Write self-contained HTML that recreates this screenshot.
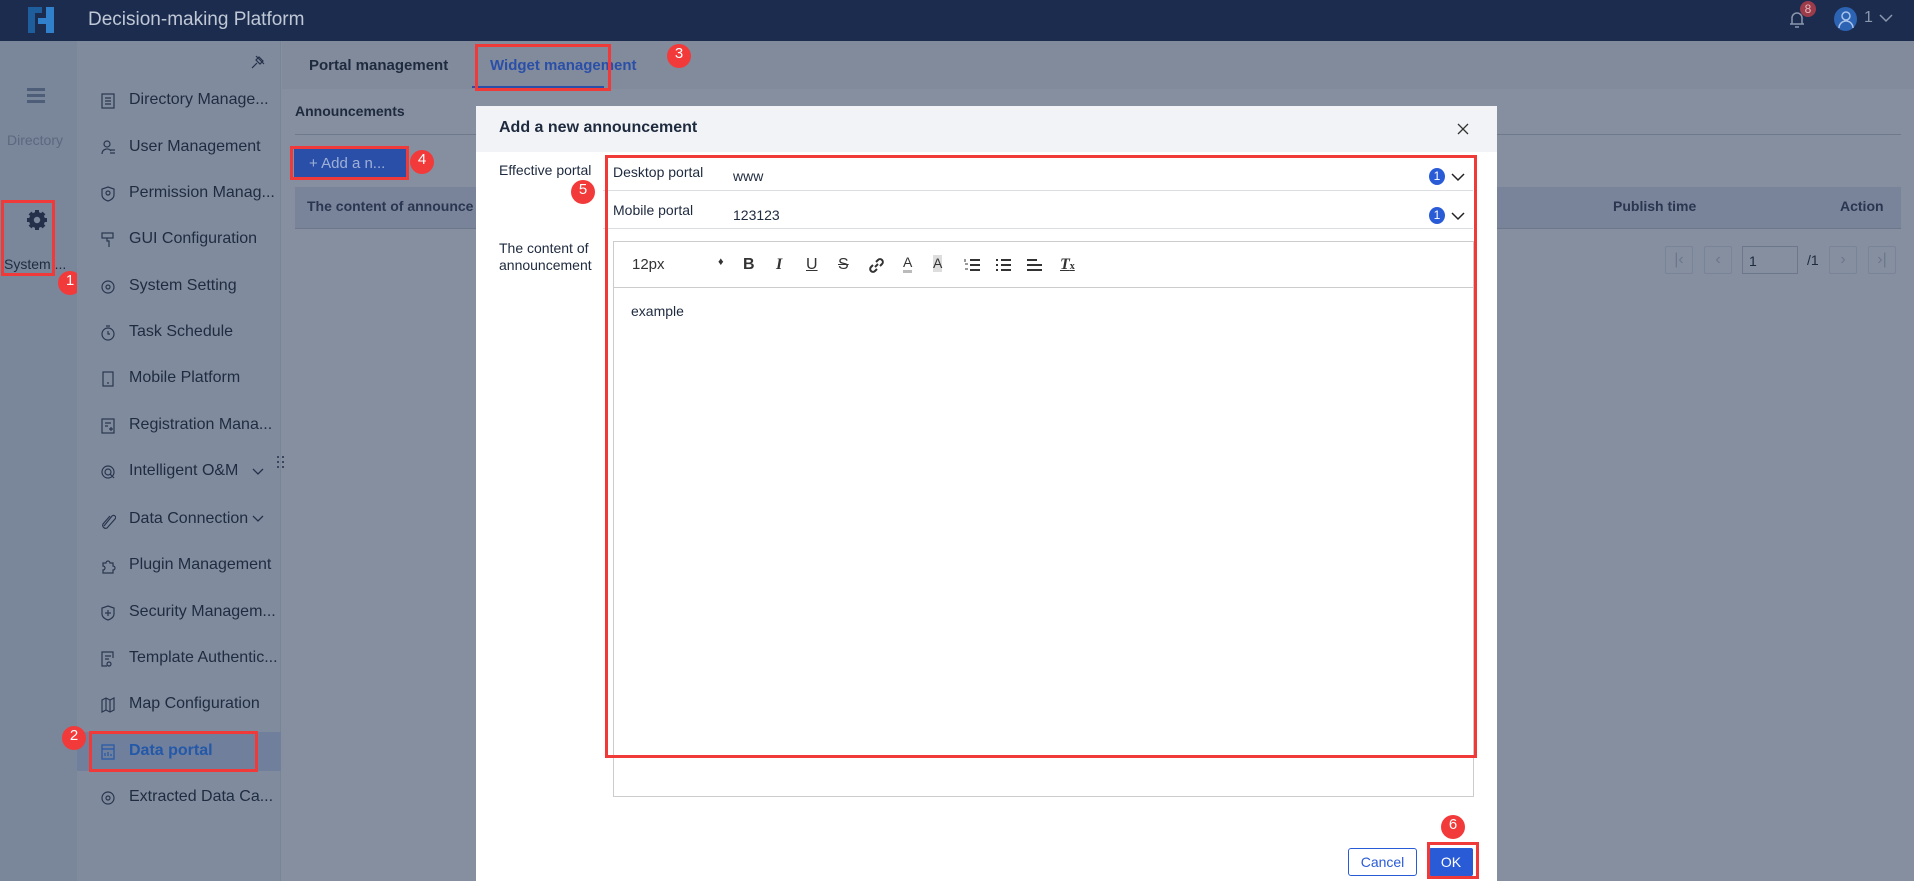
<!DOCTYPE html>
<html><head><meta charset="utf-8"><style>
*{margin:0;padding:0;box-sizing:border-box}
body{width:1914px;height:881px;overflow:hidden;position:relative;font-family:"Liberation Sans",sans-serif;background:#868fa0;color:#1e2a3e}
.a{position:absolute}
.hdr{left:0;top:0;width:1914px;height:41px;background:#1b2c4e}
.nav1{left:0;top:41px;width:77px;height:840px;background:#7a8699}
.nav2{left:77px;top:41px;width:204px;height:840px;background:#808b9d;border-right:1px solid #7a8497}
.it{position:absolute;left:129px;font-size:16px;color:#1f2b40;white-space:nowrap}
.red{position:absolute;border:3px solid #f03a3a}
.dot{position:absolute;width:24px;height:24px;border-radius:50%;background:#f23a3a;color:#fff;font-size:15px;text-align:center;line-height:20px}
.tb{position:absolute;top:256px;font-size:16px;color:#333;font-weight:bold}
.pg{position:absolute;top:246px;width:28px;height:28px;border:1px solid #7a8499;border-radius:2px;color:#6c778c;font-size:16px;text-align:center;line-height:26px}
</style></head><body>
<div class="a hdr"></div>
<svg class="a" style="left:26px;top:4px" width="32" height="32" viewBox="0 0 32 32"><path d="M2 3h14v6H9v20H2z" fill="#1f5e9c"/><path d="M12 14h8V3h8v26h-8v-9h-8z" fill="#3080cc"/></svg>
<div class="a" style="left:88px;top:9px;font-size:19px;color:#c0c8d6">Decision-making Platform</div>
<svg class="a" style="left:1787px;top:9px" width="20" height="20" viewBox="0 0 20 20"><path d="M5 15V9a5 5 0 0110 0v6zM3 15h14M8 18h4" stroke="#8a97ad" stroke-width="1.5" fill="none"/></svg>
<div class="a" style="left:1800px;top:1px;width:16px;height:16px;border-radius:50%;background:#9c3b4a;color:#e6b8bf;font-size:12px;text-align:center;line-height:16px">8</div>
<div class="a" style="left:1834px;top:7px;width:23px;height:24px;border-radius:50%;background:#2d63b3"></div>
<svg class="a" style="left:1837px;top:9px" width="18" height="20" viewBox="0 0 18 20"><circle cx="9" cy="7" r="4" stroke="#a8c3ea" stroke-width="1.5" fill="none"/><path d="M2 19a7 7 0 0114 0" stroke="#a8c3ea" stroke-width="1.5" fill="none"/></svg>
<div class="a" style="left:1864px;top:9px;font-size:16px;color:#8a97ad">1</div>
<svg class="a" style="left:1879px;top:13px" width="14" height="10"><path d="M1 2l6 6 6-6" stroke="#8a97ad" stroke-width="1.5" fill="none"/></svg>

<div class="a nav1"></div>
<div class="a" style="left:27px;top:88px;width:18px;height:3px;background:#4e5d78;box-shadow:0 6px 0 #4e5d78,0 12px 0 #4e5d78"></div>
<div class="a" style="left:7px;top:132px;font-size:14px;color:#5b6880">Directory</div>
<svg class="a" style="left:25px;top:208px" width="24" height="24" viewBox="0 0 24 24"><circle cx="12" cy="12" r="8" fill="#24304a"/><g stroke="#24304a" stroke-width="4"><path d="M12 2v20M2 12h20M5 5l14 14M19 5L5 19"/></g><circle cx="12" cy="12" r="3.2" fill="#7a8699"/></svg>
<div class="a" style="left:4px;top:256px;font-size:14px;color:#1f2b40">System ...</div>
<div class="red" style="left:1px;top:200px;width:54px;height:76px"></div>
<div class="dot" style="left:58px;top:271px">1</div>

<div class="a nav2"></div>
<svg class="a" style="left:250px;top:54px" width="16" height="16" viewBox="0 0 16 16"><path d="M6 2l8 8M9 3l4 4-3 3-4-4zM7 9l-5 5" stroke="#24304a" stroke-width="1.2" fill="none"/></svg>
<div class="a" style="left:77px;top:732px;width:204px;height:39px;background:#6f7f9c"></div>
<div class="it" style="top:91px">Directory Manage...</div>
<div class="it" style="top:138px">User Management</div>
<div class="it" style="top:184px">Permission Manag...</div>
<div class="it" style="top:230px">GUI Configuration</div>
<div class="it" style="top:277px">System Setting</div>
<div class="it" style="top:323px">Task Schedule</div>
<div class="it" style="top:369px">Mobile Platform</div>
<div class="it" style="top:416px">Registration Mana...</div>
<div class="it" style="top:462px">Intelligent O&amp;M</div>
<div class="it" style="top:510px">Data Connection</div>
<div class="it" style="top:556px">Plugin Management</div>
<div class="it" style="top:603px">Security Managem...</div>
<div class="it" style="top:649px">Template Authentic...</div>
<div class="it" style="top:695px">Map Configuration</div>
<div class="it" style="top:742px;color:#2458a8;font-weight:bold">Data portal</div>
<div class="it" style="top:788px">Extracted Data Ca...</div>
<svg class="a" style="left:252px;top:468px" width="12" height="8"><path d="M1 1l5 5 5-5" stroke="#24304a" stroke-width="1.3" fill="none"/></svg>
<svg class="a" style="left:252px;top:515px" width="12" height="8"><path d="M1 1l5 5 5-5" stroke="#24304a" stroke-width="1.3" fill="none"/></svg>
<div class="a" style="left:277px;top:456px;width:2px;height:2px;background:#3a4660;box-shadow:5px 0 #3a4660,0 5px #3a4660,5px 5px #3a4660,0 10px #3a4660,5px 10px #3a4660"></div>
<svg class="a" style="left:100px;top:93px" width="16" height="720" viewBox="0 0 16 720" fill="none" stroke="#2a3650" stroke-width="1.2">
<rect x="2" y="1" width="12" height="14"/><path d="M5 5h6M5 8h6M5 11h6"/>
<g transform="translate(0,46)"><circle cx="7" cy="5" r="3"/><path d="M2 15a5 5 0 019-3M10 11h5M10 14h5"/></g>
<g transform="translate(0,93)"><path d="M8 1l6 2v6c0 3-3 5-6 6-3-1-6-3-6-6V3z"/><circle cx="8" cy="7" r="2"/></g>
<g transform="translate(0,139)"><rect x="2" y="1" width="11" height="5"/><path d="M7 6v3h2v6"/></g>
<g transform="translate(0,186)"><circle cx="8" cy="8" r="6"/><circle cx="8" cy="8" r="2"/></g>
<g transform="translate(0,232)"><circle cx="8" cy="9" r="6"/><path d="M8 6v3h2M6 1h4"/></g>
<g transform="translate(0,278)"><rect x="3" y="1" width="10" height="14"/><path d="M7 12h2"/></g>
<g transform="translate(0,325)"><rect x="2" y="1" width="12" height="14"/><path d="M5 5h6M5 8h3M9 11h4M11 9v4"/></g>
<g transform="translate(0,371)"><circle cx="8" cy="8" r="6"/><circle cx="8" cy="8" r="3"/><path d="M10 10l4 4"/></g>
<g transform="translate(0,419)"><path d="M4 14l8-10a2 2 0 013 3l-8 9a3 3 0 01-4-4l7-8"/></g>
<g transform="translate(0,465)"><path d="M3 5h3a2 2 0 014 0h3v3a2 2 0 010 4v3H3v-3a2 2 0 000-4z"/></g>
<g transform="translate(0,512)"><path d="M8 1l6 2v6c0 3-3 5-6 6-3-1-6-3-6-6V3z"/><path d="M5 8h6M8 5v6"/></g>
<g transform="translate(0,558)"><path d="M13 7V1H2v14h5M5 5h6M5 8h4"/><circle cx="9" cy="13" r="2"/></g>
<g transform="translate(0,604)"><path d="M2 3l4-2 4 2 4-2v12l-4 2-4-2-4 2zM6 1v12M10 3v12"/></g>
<g transform="translate(0,651)" stroke="#2458a8"><rect x="2" y="1" width="12" height="14"/><path d="M2 5h12M5 12V9M8 12V8M11 12v-2"/></g>
<g transform="translate(0,697)"><circle cx="8" cy="8" r="6"/><circle cx="8" cy="8" r="2"/></g>
</svg>
<div class="red" style="left:89px;top:731px;width:169px;height:41px"></div>
<div class="dot" style="left:62px;top:726px">2</div>

<!-- main -->
<div class="a" style="left:282px;top:41px;width:1632px;height:48px;background:#828b9c"></div>
<div class="a" style="left:309px;top:57px;font-size:15px;font-weight:bold;color:#1e2a3e">Portal management</div>
<div class="a" style="left:490px;top:57px;font-size:15px;font-weight:bold;color:#2a4fa8">Widget management</div>
<div class="a" style="left:472px;top:86px;width:132px;height:2px;background:#2a4fa8"></div>
<div class="red" style="left:475px;top:44px;width:136px;height:47px"></div>
<div class="dot" style="left:667px;top:44px">3</div>
<div class="a" style="left:295px;top:103px;font-size:14px;font-weight:bold;color:#1e2a3e">Announcements</div>
<div class="a" style="left:295px;top:134px;width:1606px;height:1px;background:#6f798c"></div>
<div class="a" style="left:294px;top:149px;width:115px;height:30px;background:#2a4fa8;color:#9fb1d6;font-size:15px;line-height:30px;padding-left:15px">+ Add a n...</div>
<div class="red" style="left:290px;top:146px;width:119px;height:34px"></div>
<div class="dot" style="left:410px;top:150px">4</div>
<div class="a" style="left:295px;top:187px;width:1606px;height:42px;background:#79849a;border-bottom:1px solid #6c778c"></div>
<div class="a" style="left:307px;top:198px;font-size:14px;font-weight:bold;color:#2a3650">The content of announce</div>
<div class="a" style="left:1613px;top:198px;font-size:14px;font-weight:bold;color:#2a3650">Publish time</div>
<div class="a" style="left:1840px;top:198px;font-size:14px;font-weight:bold;color:#2a3650">Action</div>
<div class="pg" style="left:1665px">|&lsaquo;</div><div class="pg" style="left:1704px">&lsaquo;</div>
<div class="a" style="left:1742px;top:246px;width:56px;height:28px;border:1px solid #6c778c;font-size:14px;padding:6px 6px;color:#1e2a3e">1</div>
<div class="a" style="left:1807px;top:252px;font-size:14px;color:#1e2a3e">/1</div>
<div class="pg" style="left:1829px">&rsaquo;</div><div class="pg" style="left:1868px">&rsaquo;|</div>

<!-- modal -->
<div class="a" style="left:476px;top:106px;width:1021px;height:775px;background:#fff"></div>
<div class="a" style="left:476px;top:106px;width:1021px;height:46px;background:#f2f3f6"></div>
<div class="a" style="left:499px;top:119px;font-size:16px;font-weight:bold;color:#1e2a3e">Add a new announcement</div>
<svg class="a" style="left:1457px;top:123px" width="12" height="12"><path d="M1 1l10 10M11 1L1 11" stroke="#333" stroke-width="1.3"/></svg>
<div class="a" style="left:499px;top:162px;font-size:14px;color:#1e2a3e">Effective portal</div>
<div class="a" style="left:499px;top:240px;font-size:14px;color:#1e2a3e;line-height:17px">The content of<br>announcement</div>
<div class="a" style="left:613px;top:164px;font-size:14px;color:#1e2a3e">Desktop portal</div>
<div class="a" style="left:613px;top:202px;font-size:14px;color:#1e2a3e">Mobile portal</div>
<div class="a" style="left:733px;top:168px;font-size:14px;color:#1e2a3e">www</div>
<div class="a" style="left:733px;top:207px;font-size:14px;color:#1e2a3e">123123</div>
<div class="a" style="left:603px;top:190px;width:870px;height:1px;background:#dcdee3"></div>
<div class="a" style="left:603px;top:228px;width:870px;height:1px;background:#dcdee3"></div>
<div class="a" style="left:1429px;top:168px;width:16px;height:17px;border-radius:50%;background:#2a5bd7;color:#fff;font-size:12px;text-align:center;line-height:17px">1</div>
<div class="a" style="left:1429px;top:207px;width:16px;height:17px;border-radius:50%;background:#2a5bd7;color:#fff;font-size:12px;text-align:center;line-height:17px">1</div>
<svg class="a" style="left:1451px;top:173px" width="14" height="9"><path d="M1 1l6 6 6-6" stroke="#222" stroke-width="1.5" fill="none"/></svg>
<svg class="a" style="left:1451px;top:212px" width="14" height="9"><path d="M1 1l6 6 6-6" stroke="#222" stroke-width="1.5" fill="none"/></svg>
<div class="a" style="left:613px;top:241px;width:861px;height:556px;border:1px solid #ccc"></div>
<div class="a" style="left:613px;top:287px;width:861px;height:1px;background:#ccc"></div>
<div class="a" style="left:632px;top:256px;font-size:15px;color:#333">12px</div>
<div class="a" style="left:718px;top:256px;font-size:11px;color:#333">&#x2666;</div>
<div class="tb" style="left:743px">B</div>
<div class="tb" style="left:776px;font-style:italic;font-family:'Liberation Serif',serif">I</div>
<div class="tb" style="left:806px;text-decoration:underline;font-weight:normal">U</div>
<div class="tb" style="left:838px;text-decoration:line-through;font-weight:normal">S</div>
<svg class="a" style="left:868px;top:257px" width="17" height="17" viewBox="0 0 17 17"><path d="M7 10l3-3M5 8l-2 2a2.5 2.5 0 004 4l2-2M12 9l2-2a2.5 2.5 0 00-4-4L8 5" stroke="#333" stroke-width="2" fill="none"/></svg>
<div class="tb" style="left:903px;font-size:14px;top:255px;font-weight:normal;border-bottom:3px solid #bbb;line-height:15px">A</div>
<div class="tb" style="left:933px;font-size:14px;top:255px;font-weight:normal;background:#ddd;line-height:17px">A</div>
<svg class="a" style="left:964px;top:257px" width="16" height="16"><path d="M6 3h10M6 8h10M6 13h10" stroke="#333" stroke-width="2"/><path d="M1 2v3M1 7h3M1 12h3" stroke="#333" stroke-width="1"/></svg>
<svg class="a" style="left:995px;top:257px" width="16" height="16"><path d="M6 3h10M6 8h10M6 13h10M1 3h2M1 8h2M1 13h2" stroke="#333" stroke-width="2"/></svg>
<svg class="a" style="left:1026px;top:257px" width="16" height="16"><path d="M1 3h10M1 8h15M1 13h15" stroke="#333" stroke-width="2"/></svg>
<div class="tb" style="left:1060px;font-style:italic;text-decoration:underline;font-family:'Liberation Serif',serif">T<span style="font-size:10px;font-style:normal">x</span></div>
<div class="a" style="left:631px;top:303px;font-size:14px;color:#1e2a3e">example</div>
<div class="red" style="left:605px;top:155px;width:872px;height:603px"></div>
<div class="dot" style="left:571px;top:180px">5</div>
<div class="a" style="left:1348px;top:848px;width:69px;height:28px;border:1px solid #2a5bd7;border-radius:3px;color:#2a5bd7;font-size:14px;text-align:center;line-height:26px">Cancel</div>
<div class="a" style="left:1429px;top:848px;width:44px;height:28px;background:#2a5bd7;border-radius:2px;color:#fff;font-size:14px;text-align:center;line-height:28px">OK</div>
<div class="red" style="left:1427px;top:842px;width:52px;height:37px"></div>
<div class="dot" style="left:1441px;top:815px">6</div>
</body></html>
